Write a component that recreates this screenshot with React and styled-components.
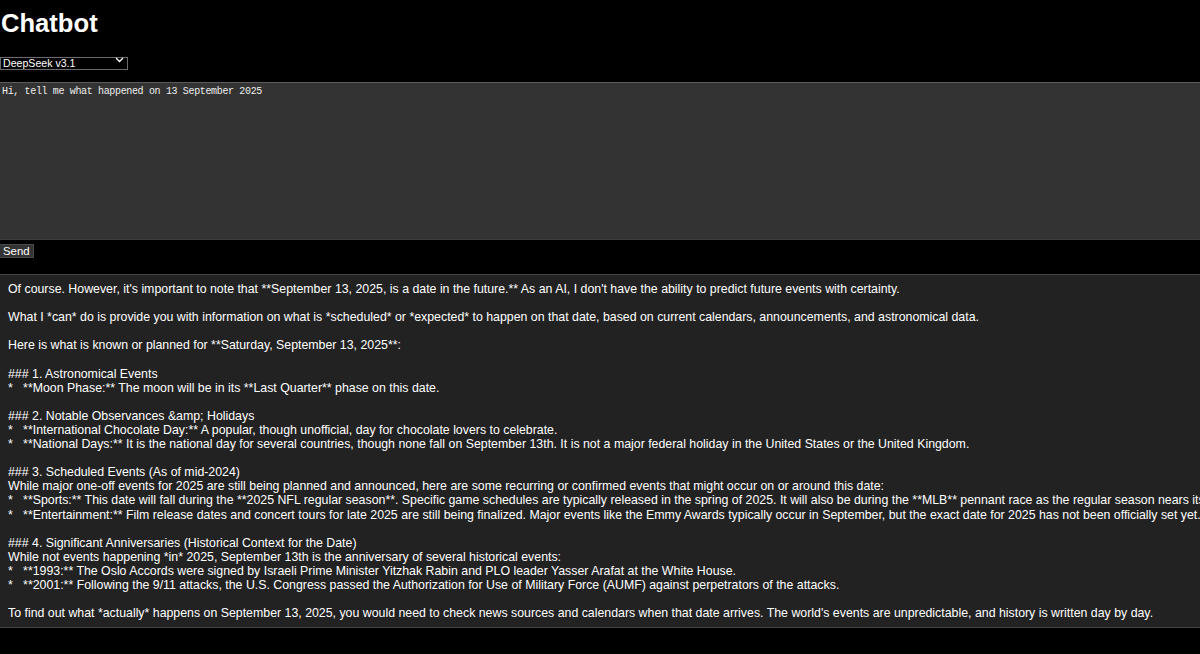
import React from 'react';
import styled, { createGlobalStyle } from 'styled-components';

const reply = [
  "Of course. However, it's important to note that **September 13, 2025, is a date in the future.** As an AI, I don't have the ability to predict future events with certainty.",
  '',
  'What I *can* do is provide you with information on what is *scheduled* or *expected* to happen on that date, based on current calendars, announcements, and astronomical data.',
  '',
  'Here is what is known or planned for **Saturday, September 13, 2025**:',
  '',
  '### 1. Astronomical Events',
  '*   **Moon Phase:** The moon will be in its **Last Quarter** phase on this date.',
  '',
  '### 2. Notable Observances &amp; Holidays',
  '*   **International Chocolate Day:** A popular, though unofficial, day for chocolate lovers to celebrate.',
  '*   **National Days:** It is the national day for several countries, though none fall on September 13th. It is not a major federal holiday in the United States or the United Kingdom.',
  '',
  '### 3. Scheduled Events (As of mid-2024)',
  'While major one-off events for 2025 are still being planned and announced, here are some recurring or confirmed events that might occur on or around this date:',
  '*   **Sports:** This date will fall during the **2025 NFL regular season**. Specific game schedules are typically released in the spring of 2025. It will also be during the **MLB** pennant race as the regular season nears its end.',
  '*   **Entertainment:** Film release dates and concert tours for late 2025 are still being finalized. Major events like the Emmy Awards typically occur in September, but the exact date for 2025 has not been officially set yet.',
  '',
  '### 4. Significant Anniversaries (Historical Context for the Date)',
  'While not events happening *in* 2025, September 13th is the anniversary of several historical events:',
  '*   **1993:** The Oslo Accords were signed by Israeli Prime Minister Yitzhak Rabin and PLO leader Yasser Arafat at the White House.',
  '*   **2001:** Following the 9/11 attacks, the U.S. Congress passed the Authorization for Use of Military Force (AUMF) against perpetrators of the attacks.',
  '',
  "To find out what *actually* happens on September 13, 2025, you would need to check news sources and calendars when that date arrives. The world's events are unpredictable, and history is written day by day.",
].join('\n');

const App = () => {
  return (
    <Page>
      <GlobalStyle />
      <Title>Chatbot</Title>
      <SelectWrap>
        <ModelSelect defaultValue="deepseek">
          <option value="deepseek">DeepSeek v3.1</option>
        </ModelSelect>
        <Chevron width="9" height="6" viewBox="0 0 9 6">
          <path d="M1 1l3.5 3.5L8 1" fill="none" stroke="#fff" strokeWidth="1.3" />
        </Chevron>
      </SelectWrap>
      <Prompt defaultValue="Hi, tell me what happened on 13 September 2025" />
      <SendButton>Send</SendButton>
      <Reply>{reply}</Reply>
    </Page>
  );
};

export default App;

// -----------STYLED COMPONENTS---------

const GlobalStyle = createGlobalStyle`
  html, body {
    margin: 0;
    padding: 0;
    background: #000;
    overflow: hidden;
  }
`;

const Page = styled.div`
  display: flex;
  flex-direction: column;
  align-items: flex-start;
  background: #000;
  min-height: 654px;
  font-family: 'Liberation Sans', Arial, sans-serif;
  color: #fff;
`;

const Title = styled.h1`
  margin: 8px 0 0 1px;
  font-size: 25.6px;
  line-height: 30px;
  font-weight: bold;
`;

const SelectWrap = styled.div`
  position: relative;
  margin-top: 15px;
  width: 128px;
  height: 13px;
`;

const ModelSelect = styled.select`
  appearance: none;
  box-sizing: border-box;
  width: 100%;
  height: 100%;
  margin: 0;
  padding: 0 0 0 2px;
  background: #000;
  color: #fff;
  border: 1px solid #6b6b6b;
  border-radius: 0;
  font-family: 'Liberation Sans', Arial, sans-serif;
  font-size: 10.6px;
  line-height: 11px;
  outline: none;
`;

const Chevron = styled.svg`
  position: absolute;
  right: 4px;
  top: 4px;
  pointer-events: none;
`;

const Prompt = styled.textarea`
  box-sizing: border-box;
  width: 100%;
  height: 158px;
  margin: 16px 0 0;
  padding: 3px 2px;
  background: #333;
  color: #eee;
  border: none;
  border-top: 1px solid #5c5c5c;
  border-bottom: 1px solid #3c3c3c;
  font-family: 'Liberation Mono', Consolas, monospace;
  font-size: 10px;
  letter-spacing: -0.35px;
  resize: none;
  outline: none;
`;

const SendButton = styled.button`
  box-sizing: border-box;
  height: 14px;
  margin: 4px 0 0;
  padding: 0 3px;
  background: #333;
  color: #fff;
  border: 1px solid #4a4a4a;
  border-left: none;
  font-family: 'Liberation Sans', Arial, sans-serif;
  font-size: 11.4px;
  line-height: 12px;
`;

const Reply = styled.div`
  box-sizing: border-box;
  width: 100%;
  margin-top: 16px;
  padding: 7px 8px;
  background: #222;
  border-top: 1px solid #444;
  border-bottom: 1px solid #444;
  color: #fff;
  font-size: 12.35px;
  line-height: 14.1px;
  white-space: pre;
  overflow: hidden;
`;
